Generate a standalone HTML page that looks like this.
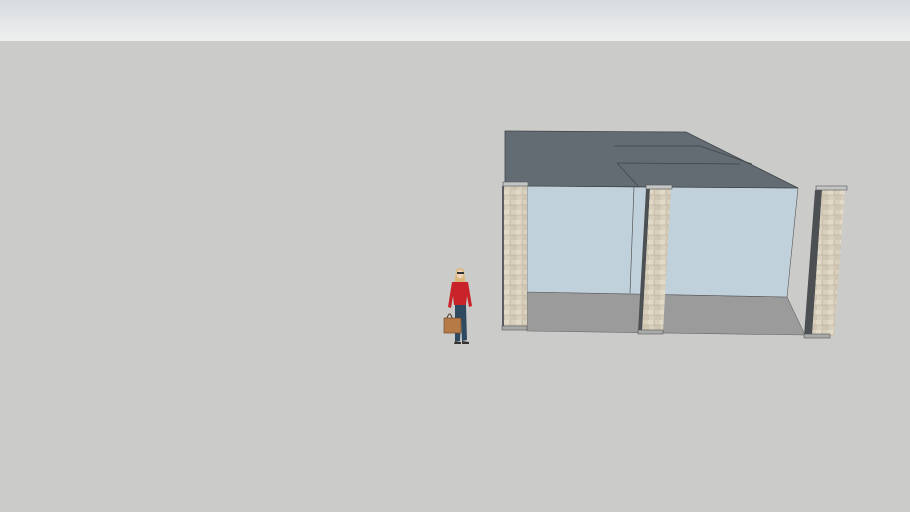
<!DOCTYPE html>
<html><head><meta charset="utf-8"><style>
html,body{margin:0;padding:0;width:910px;height:512px;overflow:hidden;background:#cbcbc9}
</style></head><body>
<svg width="910" height="512" viewBox="0 0 910 512" xmlns="http://www.w3.org/2000/svg">
<defs>
<linearGradient id="sky" x1="0" y1="0" x2="0" y2="1">
<stop offset="0" stop-color="#d7dbde"/><stop offset="1" stop-color="#eff0f0"/>
</linearGradient>
<pattern id="stone" width="12" height="10" patternUnits="userSpaceOnUse">
<rect width="12" height="10" fill="#d8cfbd"/>
<rect x="0" y="0" width="6" height="5" fill="#e2dac9"/>
<rect x="6" y="5" width="6" height="5" fill="#cfc5b1"/>
<path d="M0 5H12M6 0V5M0 5V10" stroke="#b9ad97" stroke-width="0.6"/>
</pattern>
</defs>
<rect width="910" height="41" fill="url(#sky)"/>
<rect y="41" width="910" height="471" fill="#cbcbc9"/>
<!-- floor -->
<polygon points="527,292 787,297 805,335 527,331" fill="#9b9b9b" stroke="#666" stroke-width="0.6"/>
<!-- back wall -->
<polygon points="527,186 798,188 787,297 527,292" fill="#c1d1dc" stroke="#555" stroke-width="0.6"/>
<line x1="634" y1="187" x2="630" y2="293" stroke="#555" stroke-width="0.7"/>
<!-- roof -->
<polygon points="505,131 686,132 798,188 527,186 505,185" fill="#646c73" stroke="#3f4448" stroke-width="0.8"/>
<polyline points="614,146 700,146 752,164" fill="none" stroke="#3f4448" stroke-width="0.7"/>
<polyline points="617,163 740,164" fill="none" stroke="#3f4448" stroke-width="0.7"/>
<line x1="617" y1="163" x2="638" y2="186" stroke="#3f4448" stroke-width="0.7"/>
<!-- left pillar -->
<rect x="502" y="186" width="3" height="142" fill="#5a5d60"/>
<rect x="504" y="185" width="23" height="143" fill="url(#stone)"/>
<rect x="503" y="182" width="25" height="4" fill="#c4c6c6" stroke="#555" stroke-width="0.6"/>
<rect x="502" y="326" width="25" height="4" fill="#a9abab" stroke="#555" stroke-width="0.6"/>
<!-- middle pillar -->
<polygon points="646,189 650,189 642,332 638,332" fill="#4d5053"/>
<polygon points="650,189 671,189 663,332 642,332" fill="url(#stone)"/>
<rect x="646" y="185" width="26" height="4" fill="#c4c6c6" stroke="#555" stroke-width="0.6"/>
<rect x="638" y="330" width="25" height="4" fill="#a9abab" stroke="#555" stroke-width="0.6"/>
<!-- right pillar -->
<polygon points="815,190 822,190 812,336 804,336" fill="#4d5053"/>
<polygon points="822,190 845,190 834,336 812,336" fill="url(#stone)"/>
<rect x="816" y="186" width="31" height="4" fill="#c4c6c6" stroke="#555" stroke-width="0.6"/>
<rect x="804" y="334" width="26" height="4" fill="#a9abab" stroke="#555" stroke-width="0.6"/>
<!-- person -->
<g>
<path d="M456 270 Q460 266 464 270 L466 288 L454 288 Z" fill="#d9b87a"/>
<ellipse cx="460" cy="274" rx="3.5" ry="4.5" fill="#f0d2b8"/>
<rect x="457" y="272" width="7" height="2" fill="#333"/>
<path d="M452 282 L468 282 L472 306 L469 307 L467 296 L466 305 L454 305 L453 296 L451 308 L448 307 Z" fill="#c9232a"/>
<path d="M455 305 L466 305 L467 340 L462 341 L461 318 L460 341 L455 341 Z" fill="#2f4a5f"/>
<path d="M455 341 L461 342 L461 344 L454 344 Z M462 341 L469 342 L469 344 L462 344Z" fill="#333"/>
<path d="M447 318 Q450 310 452 318" fill="none" stroke="#4a2f1a" stroke-width="1"/>
<rect x="444" y="318" width="17" height="15" fill="#b57a45" stroke="#6b4425" stroke-width="0.6"/>
</g>
</svg>
</body></html>
